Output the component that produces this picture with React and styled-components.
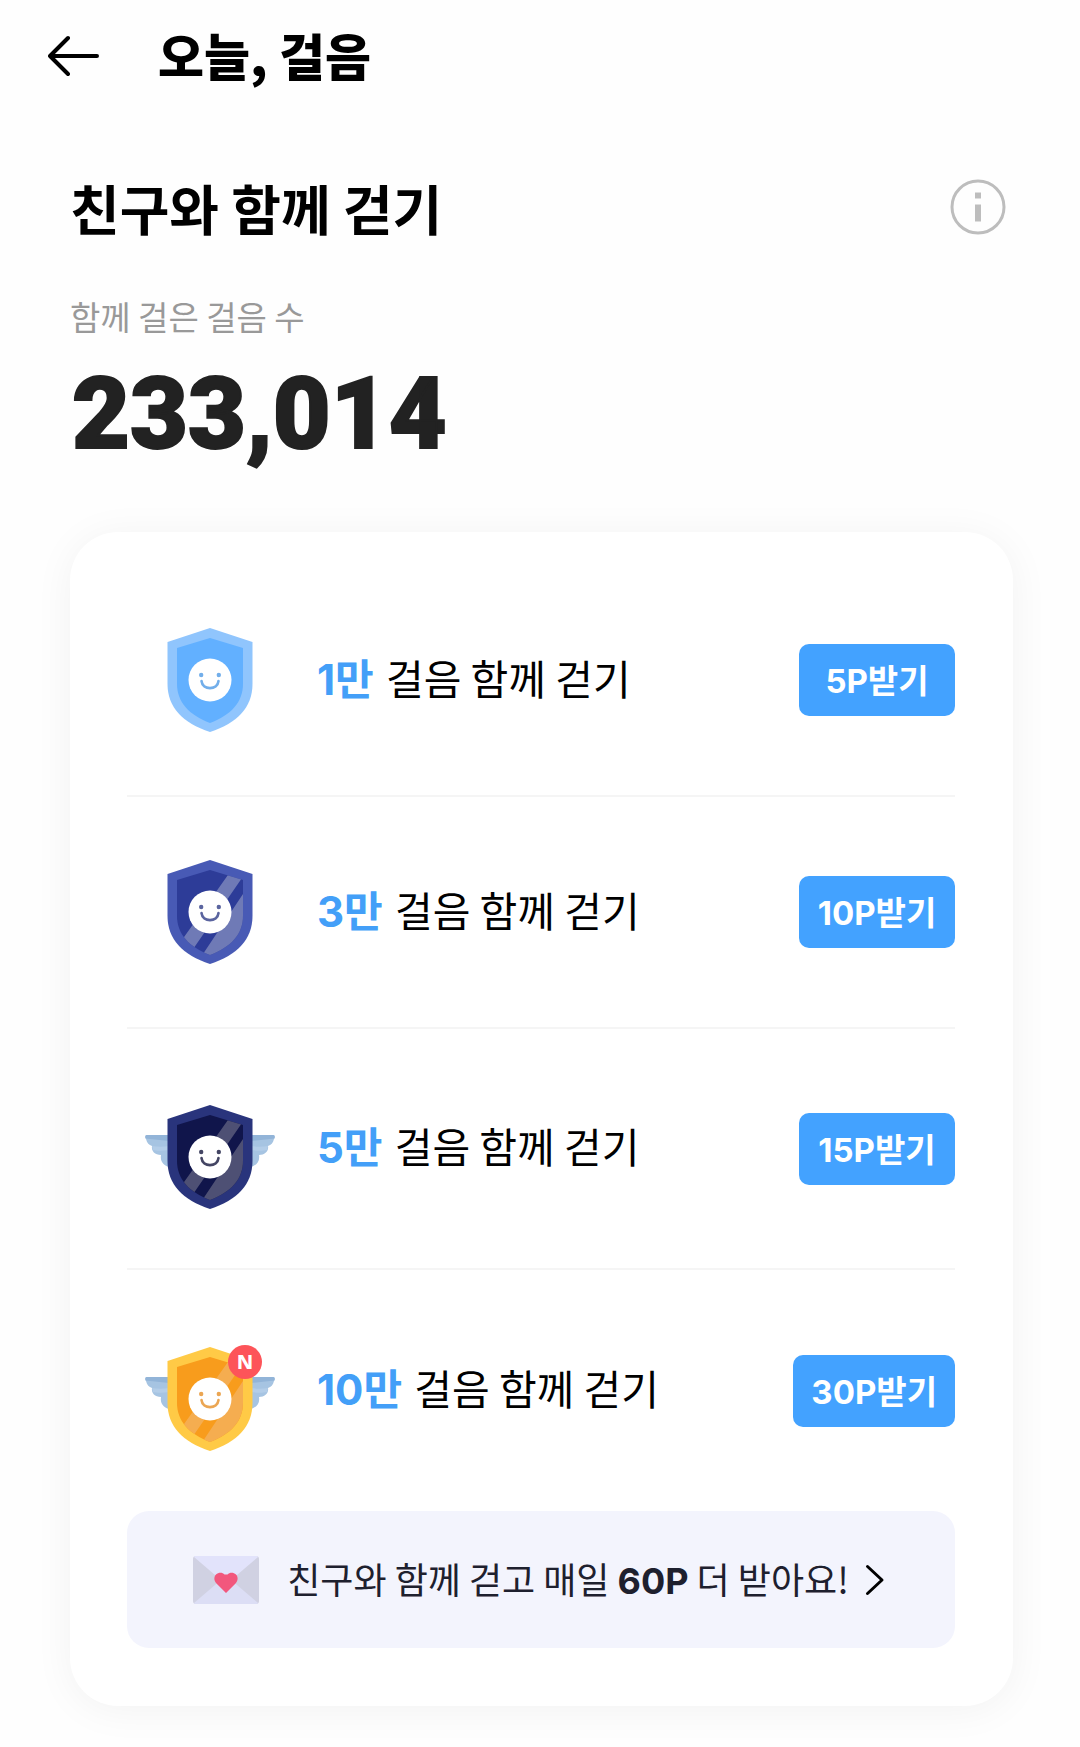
import React from 'react';
import styled, { createGlobalStyle } from 'styled-components';

const GlobalStyle = createGlobalStyle`
  * {
    box-sizing: border-box;
  }

  body {
    margin: 0;
    background: #fefefe;
    color: #000;
    font-family: 'Noto Sans CJK KR', sans-serif;
  }

  button {
    font-family: inherit;
    border: none;
    cursor: pointer;
  }
`;

const Header = styled.header`
  display: flex;
  align-items: center;
  gap: 58px;
  height: 112px;
  padding: 0 48px;
`;

const IconButton = styled.button`
  display: flex;
  padding: 0;
  background: none;
`;

const PageTitle = styled.h1`
  margin: 0;
  padding-bottom: 4px;
  font-size: 50px;
  font-weight: 900;
  line-height: 72px;
`;

const Main = styled.main`
  padding: 54px 67px 40px 70px;
`;

const TitleRow = styled.div`
  display: flex;
  align-items: center;
  justify-content: space-between;
  padding-right: 7px;
`;

const Title = styled.h2`
  margin: 0;
  padding-top: 2px;
  font-size: 54px;
  font-weight: 700;
  line-height: 80px;
`;

const Label = styled.p`
  margin: 44px 0 0;
  color: #999;
  font-size: 33px;
  font-weight: 400;
  line-height: 48px;
`;

const Total = styled.p`
  margin: 18px 0 0;
  padding-left: 2px;
  color: #222;
  font-family: Roboto, sans-serif;
  font-size: 100px;
  font-weight: 900;
  line-height: 112px;
  -webkit-text-stroke: 2px #222;
`;

const Card = styled.section`
  margin-top: 62px;
  padding: 33px 58px 58px 57px;
  border-radius: 48px;
  background: #fff;
  box-shadow: 0 4px 40px rgba(0, 0, 0, 0.05);
`;

const List = styled.ul`
  margin: 0;
  padding: 0;
  list-style: none;
`;

const Row = styled.li`
  display: flex;
  align-items: center;
  height: ${({ $tall }) => ($tall ? 241 : 232)}px;
  padding-left: 18px;
  border-bottom: 2px solid #f5f5f5;

  &:last-child {
    border-bottom: none;
  }
`;

const BadgeBox = styled.div`
  position: relative;
  display: flex;
  flex: none;
  margin-right: 42px;
`;

const NewMark = styled.span`
  position: absolute;
  top: 14px;
  left: 83px;
  width: 34px;
  border-radius: 50%;
  background: #fd5459;
  color: #fff;
  font-family: 'Noto Sans', sans-serif;
  font-size: 20px;
  font-weight: 800;
  line-height: 34px;
  text-align: center;
`;

const Goal = styled.p`
  flex: 1;
  margin: 0;
  padding-bottom: 4px;
  font-size: 41px;
  font-weight: 400;
  line-height: 60px;
`;

const Steps = styled.strong`
  margin-right: 3px;
  color: #439ff8;
  font-family: Inter, 'Noto Sans CJK KR', sans-serif;
  font-size: 42px;
  font-weight: 700;
`;

const RewardButton = styled.button`
  min-width: 156px;
  height: 72px;
  padding: 0 18px 2px;
  border-radius: 10px;
  background: #43a2ff;
  color: #fff;
  font-family: Inter, 'Noto Sans CJK KR', sans-serif;
  font-size: 33px;
  font-weight: 700;
`;

const Banner = styled.a`
  display: flex;
  align-items: center;
  justify-content: center;
  height: 137px;
  padding-right: 4px;
  border-radius: 22px;
  background: #f3f4fd;
  color: #1e202e;
  font-size: 36px;
  font-weight: 400;
  text-decoration: none;
`;

const BannerText = styled.span`
  margin: 0 16px 0 28px;
  padding-bottom: 4px;

  strong {
    font-family: Inter, sans-serif;
    font-weight: 700;
  }
`;

const BackIcon = () => (
  <svg width="52" height="44" viewBox="0 0 52 44" fill="none">
    <path
      d="M20 4 2 22l18 18M2 22h47"
      stroke="#000"
      strokeWidth="4"
      strokeLinecap="round"
      strokeLinejoin="round"
    />
  </svg>
);

const InfoIcon = () => (
  <svg width="56" height="56" viewBox="0 0 56 56">
    <circle cx="28" cy="28" r="26" fill="none" stroke="#bdbdbd" strokeWidth="3" />
    <path d="M25 13.500h6v6h-6zM25 25.500h6v17h-6z" fill="#bdbdbd" />
  </svg>
);

const EnvelopeIcon = () => (
  <svg width="66" height="48" viewBox="0 0 66 48">
    <rect width="66" height="48" rx="3" fill="#d0d1e2" />
    <path d="M2 0h62q1 0 1 1L37 25q-4 3-8 0L1 1q0-1 1-1z" fill="#e2e3fb" />
    <path d="M2 48h62q1 0 1-1L37 23q-4-3-8 0L1 47q0 1 1 1z" fill="#dcdef5" />
    <path
      d="M33 37 23.500 27.500c-3-3-2.500-7-.5-9 2.500-2.500 6.500-2.500 8.500 0h3c2-2.500 6-2.500 8.500 0 2 2 2.500 6-.5 9z"
      fill="#f2577d"
    />
  </svg>
);

const ChevronIcon = () => (
  <svg width="20" height="34" viewBox="0 0 20 34" fill="none">
    <path
      d="m2.500 3.500 14.500 13.500-14.500 13.500"
      stroke="#000"
      strokeWidth="3"
      strokeLinecap="round"
      strokeLinejoin="round"
    />
  </svg>
);

const Wing = () => (
  <>
    <path
      d="M24 46H2C0 46 0 48 1 50c1 4 3 6 6 7-1 5 3 9 9 9-1 6 2 10 8 12z"
      fill="#a6c4e2"
    />
    <path d="M24 46H2C0 46 0 48 .500 49.500L24 52z" fill="#92b4d8" />
    <path d="M7 57c6 1 11 1 17 0v4c-6 1-12 1-16 0z" fill="#b3cde8" />
  </>
);

const Shield = ({ colors, winged }) => {
  const { outer, inner, shine, face } = colors;
  const clipId = `shield-${outer.slice(1)}`;
  const top = winged ? 16 : 0;

  return (
    <svg width="130" height={104 + top} viewBox={`0 0 130 ${104 + top}`}>
      {winged && (
        <>
          <Wing />
          <g transform="translate(130 0) scale(-1 1)">
            <Wing />
          </g>
        </>
      )}
      <g transform={`translate(0 ${top})`}>
        <clipPath id={clipId}>
          <path d="M65 10 98 20v36c0 18-12 31-33 39-21-8-33-21-33-39V20z" />
        </clipPath>
        <path
          d="M65 0 107.500 14v42c0 23-15 39-42.500 48-27.500-9-42.500-25-42.500-48V14z"
          fill={outer}
        />
        <g clipPath={`url(#${clipId})`}>
          <rect x="30" y="8" width="70" height="90" fill={inner} />
          {shine && (
            <path
              d="M89.300 6 32 87l12 8 62-90zM110 16 54 100h60z"
              fill={shine}
            />
          )}
        </g>
        <circle cx="65" cy="52" r="21.500" fill="#fff" />
        <circle cx="56.200" cy="47" r="2.200" fill={face} />
        <circle cx="73.800" cy="47" r="2.200" fill={face} />
        <path
          d="M56.500 53c1 9.500 16 9.500 17 0"
          fill="none"
          stroke={face}
          strokeWidth="2.600"
          strokeLinecap="round"
        />
      </g>
    </svg>
  );
};

const GOALS = [
  {
    steps: '1만',
    point: 5,
    colors: { outer: '#90c5fd', inner: '#62b0ff', face: '#72aeea' },
  },
  {
    steps: '3만',
    point: 10,
    colors: { outer: '#485ab5', inner: '#2d3c98', shine: '#6f7ab6', face: '#5a649f' },
  },
  {
    steps: '5만',
    point: 15,
    winged: true,
    colors: { outer: '#29347c', inner: '#10154b', shine: '#4e5074', face: '#434563' },
  },
  {
    steps: '10만',
    point: 30,
    winged: true,
    isNew: true,
    colors: { outer: '#ffca46', inner: '#f89c1c', shine: '#f5ad50', face: '#eba653' },
  },
];

const GoalRow = ({ goal }) => {
  const { steps, point, winged, isNew, colors } = goal;

  return (
    <Row $tall={winged}>
      <BadgeBox>
        <Shield colors={colors} winged={winged} />
        {isNew && <NewMark>N</NewMark>}
      </BadgeBox>
      <Goal>
        <Steps>{steps}</Steps> 걸음 함께 걷기
      </Goal>
      <RewardButton type="button">{point}P받기</RewardButton>
    </Row>
  );
};

const App = () => {
  return (
    <>
      <GlobalStyle />
      <Header>
        <IconButton type="button" aria-label="뒤로">
          <BackIcon />
        </IconButton>
        <PageTitle>오늘, 걸음</PageTitle>
      </Header>
      <Main>
        <TitleRow>
          <Title>친구와 함께 걷기</Title>
          <IconButton type="button" aria-label="안내">
            <InfoIcon />
          </IconButton>
        </TitleRow>
        <Label>함께 걸은 걸음 수</Label>
        <Total>233,014</Total>
        <Card>
          <List>
            {GOALS.map((goal) => (
              <GoalRow key={goal.steps} goal={goal} />
            ))}
          </List>
          <Banner href="#invite">
            <EnvelopeIcon />
            <BannerText>
              친구와 함께 걷고 매일 <strong>60P</strong> 더 받아요!
            </BannerText>
            <ChevronIcon />
          </Banner>
        </Card>
      </Main>
    </>
  );
};

export default App;
